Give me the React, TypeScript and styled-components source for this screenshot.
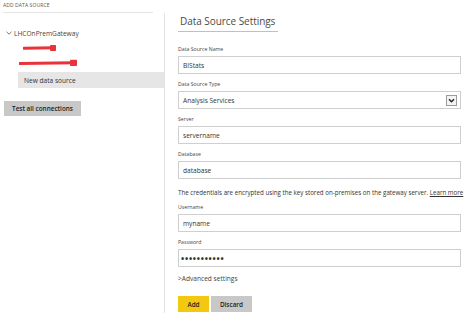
import React from 'react';
import styled, { createGlobalStyle } from 'styled-components';

const GlobalStyle = createGlobalStyle`
  html, body {
    margin: 0;
    padding: 0;
    background: #fff;
  }
  body {
    font-family: 'Open Sans', 'Noto Sans', sans-serif;
    color: #333;
  }
`;

const Page = styled.div`
  display: grid;
  grid-template-columns: 165px 1fr;
  width: 474px;
  height: 313px;
  overflow: hidden;
`;

const Side = styled.div`
  display: flex;
  flex-direction: column;
`;

const SideHeading = styled.div`
  height: 13px;
  box-sizing: border-box;
  margin: 0 12px 0 3px;
  padding-top: 2px;
  font-size: 5px;
  letter-spacing: 0.1px;
  text-transform: uppercase;
  color: #555;
  border-bottom: 1px solid #e4e4e4;
`;

const Tree = styled.div`
  flex: 1;
  border-right: 1px solid #e4e4e4;
  padding-top: 14px;
  display: flex;
  flex-direction: column;
`;

const GatewayRow = styled.div`
  display: flex;
  align-items: center;
  gap: 2px;
  height: 12px;
  padding-left: 6px;
  font-size: 6.6px;
  color: #444;
`;

const Redacted = styled.svg<{ $indent: number; $gap: number }>`
  display: block;
  flex: none;
  margin-left: ${(p) => p.$indent}px;
  margin-top: ${(p) => p.$gap}px;
`;

const SourceRow = styled.div`
  margin: 5px 0 0 18px;
  height: 16px;
  display: flex;
  align-items: center;
  padding-left: 6px;
  background: #e6e6e6;
  font-size: 6.6px;
  color: #333;
`;

const TestButton = styled.button`
  margin: 13px 0 0 4px;
  width: 77px;
  height: 15px;
  border: none;
  background: #c8c8c8;
  font-family: inherit;
  font-size: 6.4px;
  font-weight: 600;
  color: #222;
  padding: 0;
`;

const Main = styled.div`
  padding: 14px 0 0 13px;
  display: flex;
  flex-direction: column;
`;

const Title = styled.div`
  align-self: flex-start;
  font-size: 10px;
  letter-spacing: -0.05px;
  color: #4a4a4a;
  padding: 1px 3px 3px 2px;
  line-height: 13px;
  border-bottom: 1px solid #f2c811;
  margin-bottom: 12px;
`;

const Field = styled.div`
  display: flex;
  flex-direction: column;
  width: 283px;
  margin-bottom: 5px;
`;

const Label = styled.div`
  height: 10px;
  line-height: 10px;
  font-size: 5.2px;
  color: #444;
  margin-bottom: 2px;
`;

const Input = styled.div<{ $dots?: boolean }>`
  box-sizing: border-box;
  height: 18px;
  border: 1px solid #cfcfcf;
  display: flex;
  align-items: center;
  justify-content: space-between;
  padding: 0 3px 0 ${(p) => (p.$dots ? '2px' : '4px')};
  font-size: ${(p) => (p.$dots ? '8.5px' : '6.6px')};
  font-weight: ${(p) => (p.$dots ? 700 : 400)};
  letter-spacing: ${(p) => (p.$dots ? '0.75px' : '0')};
  color: #333;
`;

const ArrowBox = styled.svg`
  display: block;
`;

const Note = styled.div`
  margin-top: 4px;
  height: 10px;
  line-height: 10px;
  font-size: 6.2px;
  color: #333;
  white-space: nowrap;
  margin-bottom: 4px;
`;

const Link = styled.span`
  text-decoration: underline;
`;

const Advanced = styled.div`
  height: 10px;
  line-height: 10px;
  font-size: 6.6px;
  color: #444;
  margin-top: 2px;
`;

const Actions = styled.div`
  display: flex;
  gap: 2px;
  margin-top: 12px;
`;

const ActionButton = styled.button<{ $primary?: boolean }>`
  height: 16px;
  width: ${(p) => (p.$primary ? '31px' : '41px')};
  border: none;
  padding: 0;
  background: ${(p) => (p.$primary ? '#f2c811' : '#c8c8c8')};
  font-family: inherit;
  font-size: 6.4px;
  font-weight: 600;
  color: #222;
`;

const fields: { label: string; value: string; select?: boolean; dots?: boolean }[] = [
  { label: 'Data Source Name', value: 'BIStats' },
  { label: 'Data Source Type', value: 'Analysis Services', select: true },
  { label: 'Server', value: 'servername' },
  { label: 'Database', value: 'database' },
];

const creds = [
  { label: 'Username', value: 'myname' },
  { label: 'Password', value: '•••••••••••', dots: true },
];

function FieldRow({ label, value, select, dots }: { label: string; value: string; select?: boolean; dots?: boolean }) {
  return (
    <Field>
      <Label>{label}</Label>
      <Input $dots={dots}>
        <span>{value}</span>
        {select && (
          <ArrowBox width="11" height="11" viewBox="0 0 11 11">
            <rect x="0.5" y="0.5" width="10" height="10" fill="#f4f4f4" stroke="#9a9a9a" />
            <path d="M3 4.2 L5.5 6.8 L8 4.2" fill="none" stroke="#222" strokeWidth="1.4" />
          </ArrowBox>
        )}
      </Input>
    </Field>
  );
}

export default function App() {
  return (
    <Page>
      <GlobalStyle />
      <Side>
        <SideHeading>Add Data Source</SideHeading>
        <Tree>
          <GatewayRow>
            <svg width="6" height="4" viewBox="0 0 6 4">
              <path d="M0.5 0.8 L3 3.2 L5.5 0.8" fill="none" stroke="#555" strokeWidth="0.8" />
            </svg>
            LHCOnPremGateway
          </GatewayRow>
          <Redacted $indent={23} $gap={5} width="36" height="8" viewBox="0 0 36 8">
            <path d="M1 4.2 L31 3.8" stroke="#e8333a" strokeWidth="3" strokeLinecap="round" />
            <rect x="27" y="1" width="6" height="6" rx="0.8" fill="#e8333a" />
          </Redacted>
          <Redacted $indent={19} $gap={7} width="60" height="8" viewBox="0 0 60 8">
            <path d="M1 4.4 L55 3.8" stroke="#e8333a" strokeWidth="3" strokeLinecap="round" />
            <rect x="51" y="0.8" width="7" height="6.2" rx="0.8" fill="#e8333a" />
          </Redacted>
          <SourceRow>New data source</SourceRow>
          <div>
            <TestButton>Test all connections</TestButton>
          </div>
        </Tree>
      </Side>
      <Main>
        <Title>Data Source Settings</Title>
        {fields.map((f) => (
          <FieldRow key={f.label} {...f} />
        ))}
        <Note>
          The credentials are encrypted using the key stored on-premises on the gateway server. <Link>Learn more</Link>
        </Note>
        {creds.map((f) => (
          <FieldRow key={f.label} {...f} />
        ))}
        <Advanced>&gt;Advanced settings</Advanced>
        <Actions>
          <ActionButton $primary>Add</ActionButton>
          <ActionButton>Discard</ActionButton>
        </Actions>
      </Main>
    </Page>
  );
}
